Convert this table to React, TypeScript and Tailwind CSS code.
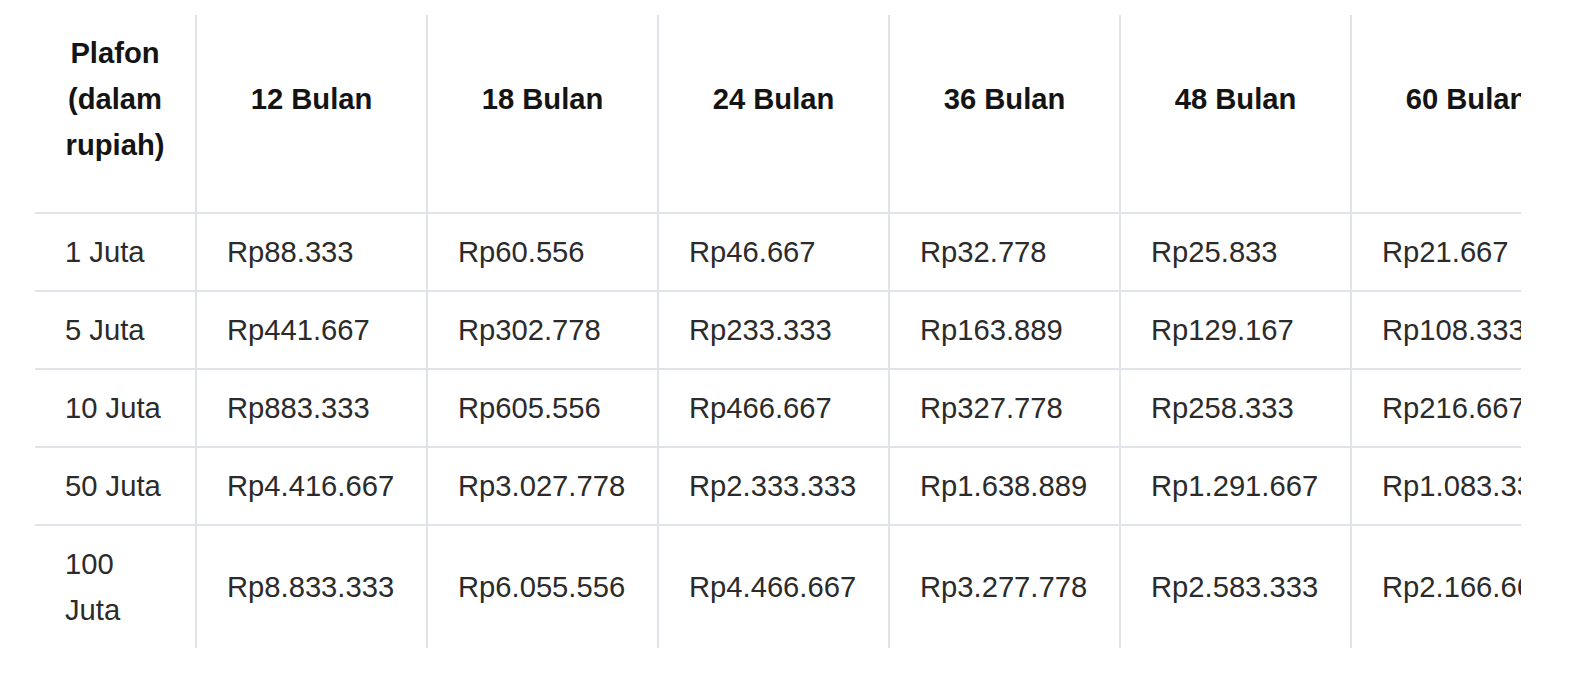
import React from "react";

const headers = ["12 Bulan", "18 Bulan", "24 Bulan", "36 Bulan", "48 Bulan", "60 Bulan"];

const rows: { label: string; values: string[] }[] = [
  { label: "1 Juta", values: ["Rp88.333", "Rp60.556", "Rp46.667", "Rp32.778", "Rp25.833", "Rp21.667"] },
  { label: "5 Juta", values: ["Rp441.667", "Rp302.778", "Rp233.333", "Rp163.889", "Rp129.167", "Rp108.333"] },
  { label: "10 Juta", values: ["Rp883.333", "Rp605.556", "Rp466.667", "Rp327.778", "Rp258.333", "Rp216.667"] },
  { label: "50 Juta", values: ["Rp4.416.667", "Rp3.027.778", "Rp2.333.333", "Rp1.638.889", "Rp1.291.667", "Rp1.083.333"] },
  { label: "100 Juta", values: ["Rp8.833.333", "Rp6.055.556", "Rp4.466.667", "Rp3.277.778", "Rp2.583.333", "Rp2.166.667"] },
];

export default function App() {
  return (
    <div
      className="w-[1582px] h-[675px] bg-white pt-[15px] pl-[35px]"
      style={{ fontFamily: '"Liberation Sans", Arial, sans-serif' }}
    >
      <div className="w-[1486px] overflow-hidden">
        <table className="table-fixed border-separate border-spacing-0 w-[1546px] text-[29.2px] leading-[46px]">
          <colgroup>
            <col className="w-[160px]" />
            <col className="w-[231px]" />
            <col className="w-[231px]" />
            <col className="w-[231px]" />
            <col className="w-[231px]" />
            <col className="w-[231px]" />
            <col className="w-[231px]" />
          </colgroup>
          <thead>
            <tr>
              <th className="px-[30px] pt-[15px] pb-[44px] text-center align-middle font-bold text-[#141414] border-b-2 border-[#e0e4e9]">
                Plafon (dalam rupiah)
              </th>
              {headers.map((h) => (
                <th
                  key={h}
                  className="px-[30px] pt-[15px] pb-[44px] text-center align-middle font-bold text-[#141414] whitespace-nowrap border-b-2 border-l-2 border-[#e0e4e9]"
                >
                  {h}
                </th>
              ))}
            </tr>
          </thead>
          <tbody>
            {rows.map((r, i) => {
              const last = i === rows.length - 1;
              return (
                <tr key={r.label}>
                  <td
                    className={
                      last
                        ? "px-[30px] py-[15px] text-left align-middle text-[#2b2b2b]"
                        : "px-[30px] py-[15px] text-left align-middle text-[#2b2b2b] border-b-2 border-[#e0e4e9]"
                    }
                  >
                    {r.label}
                  </td>
                  {r.values.map((v, j) => (
                    <td
                      key={j}
                      className={
                        last
                          ? "px-[30px] py-[15px] text-left align-middle text-[#2b2b2b] whitespace-nowrap border-l-2 border-[#e0e4e9]"
                          : "px-[30px] py-[15px] text-left align-middle text-[#2b2b2b] whitespace-nowrap border-l-2 border-b-2 border-[#e0e4e9]"
                      }
                    >
                      {v}
                    </td>
                  ))}
                </tr>
              );
            })}
          </tbody>
        </table>
      </div>
    </div>
  );
}
